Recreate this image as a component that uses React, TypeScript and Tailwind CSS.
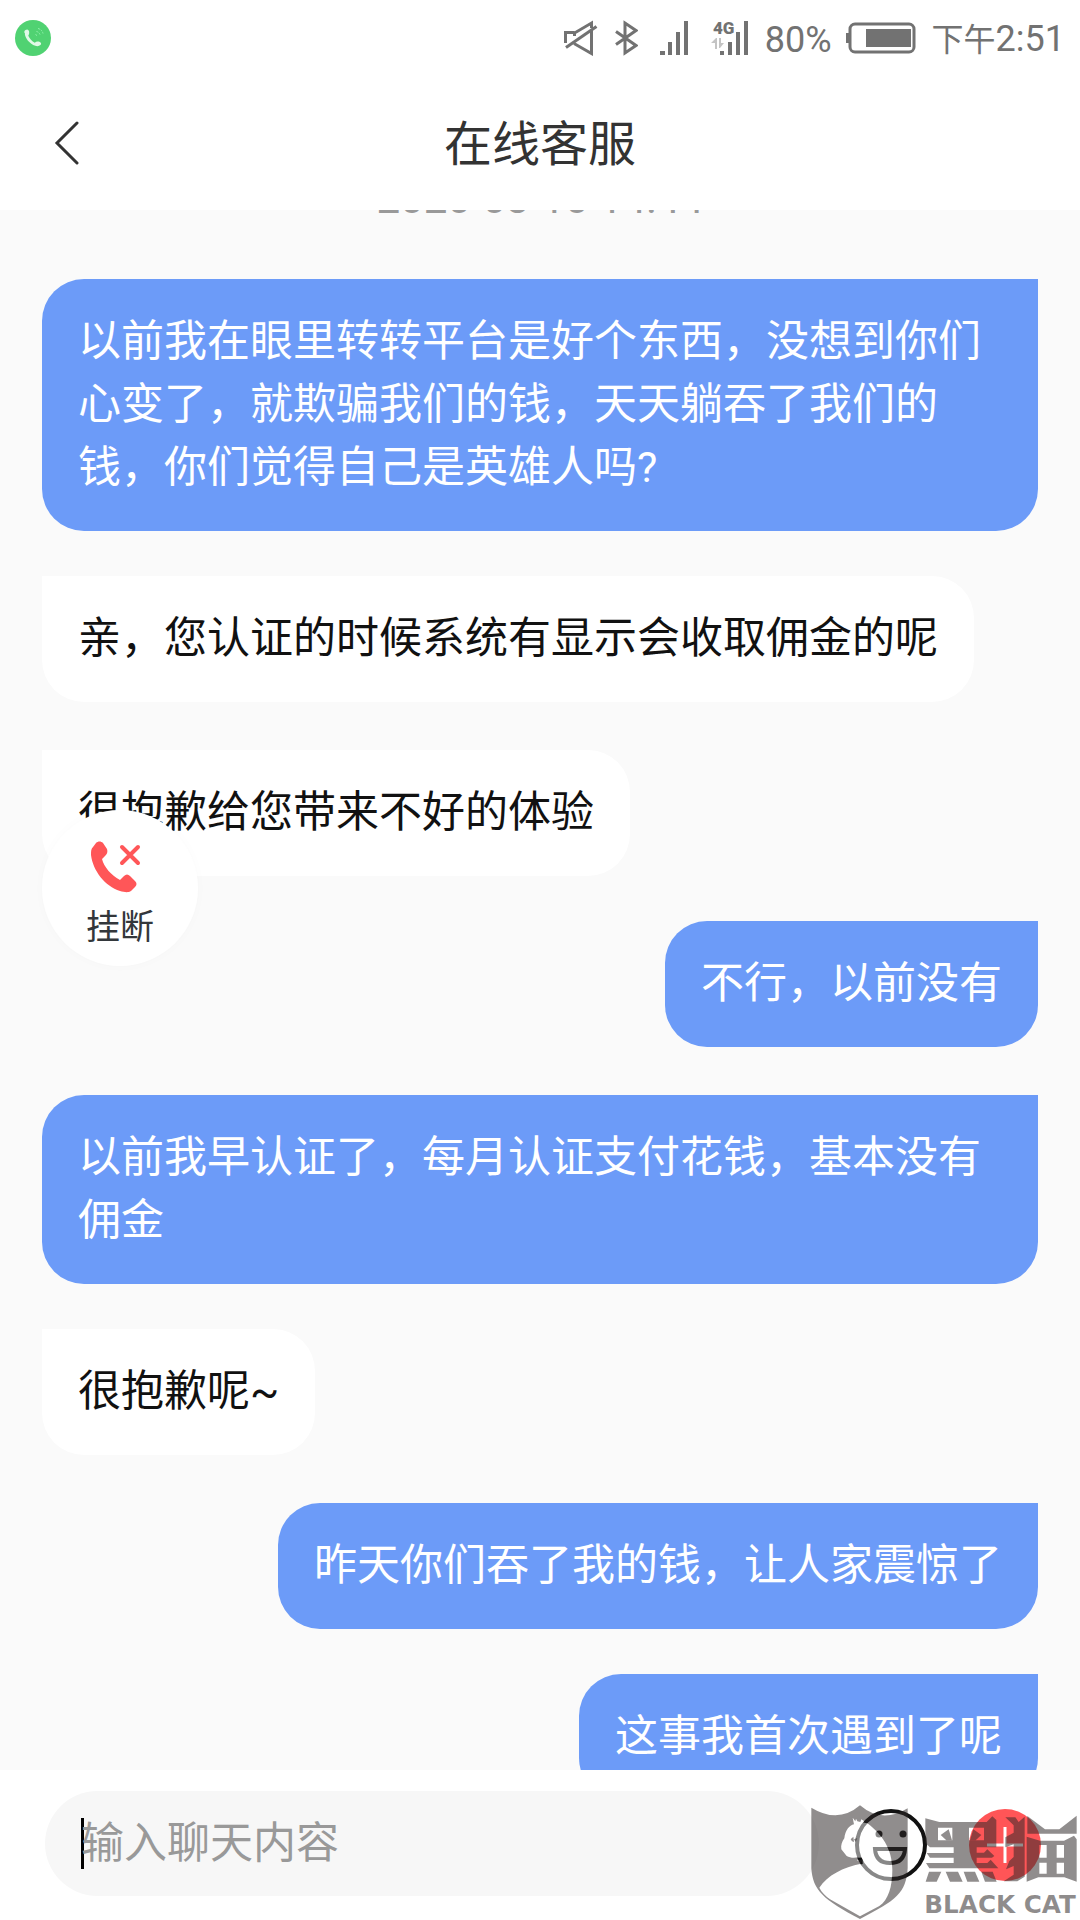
import React, { useState } from 'react';

interface Message {
  id: number;
  from: 'me' | 'agent';
  text: string;
}

const messages: Message[] = [
  { id: 1, from: 'me', text: '以前我在眼里转转平台是好个东西，没想到你们心变了，就欺骗我们的钱，天天躺吞了我们的钱，你们觉得自己是英雄人吗?' },
  { id: 2, from: 'agent', text: '亲，您认证的时候系统有显示会收取佣金的呢' },
  { id: 3, from: 'agent', text: '很抱歉给您带来不好的体验' },
  { id: 4, from: 'me', text: '不行，以前没有' },
  { id: 5, from: 'me', text: '以前我早认证了，每月认证支付花钱，基本没有佣金' },
  { id: 6, from: 'agent', text: '很抱歉呢~' },
  { id: 7, from: 'me', text: '昨天你们吞了我的钱，让人家震惊了' },
  { id: 8, from: 'me', text: '这事我首次遇到了呢' },
];

function StatusBar() {
  return (
    <div className="flex h-[76px] items-center justify-between px-[15px] text-[36px] leading-[42px] text-[#727272]">
      <svg width="36" height="36" viewBox="0 0 36 36">
        <circle cx="18" cy="18" r="18" fill="#50d272" />
        <path d="M10.500 10c2-1.500 3.300 0 3.600 1.500.3 1.700-.1 3-.8 4.200 1.200 2.800 3.700 5.600 6.500 7 1.200-1.300 2.800-1.700 4.600-.9 1.900.9 2.200 2.200 1 3.300-2.600 2.300-7.800.6-11.400-3.300C10.500 18 9.600 14.500 10 13.500 9 12.500 9 11 10.500 10z" fill="#e0f9e7" />
        <path d="M20.500 14.500l1.500 1M21.500 11.500q2.500.5 3.500 3M23 8.500q4 1 5 5" stroke="#8ff0aa" strokeWidth="1" strokeDasharray="2 1" fill="none" />
      </svg>
      <div className="flex items-center">
        <svg className="mr-[17px]" width="34" height="36" viewBox="0 0 34 36" fill="none" stroke="#727272">
          <path d="M1.500 23V12.500h9M10.500 16v-3L27.500 3v5M27.500 10v23.500L10 23.500" strokeWidth="3" />
          <path d="M2 27.500L32.500 6.500" strokeWidth="3" />
        </svg>
        <svg className="mr-[22px]" width="23" height="36" viewBox="0 0 23 36" fill="none" stroke="#727272" strokeWidth="3">
          <path d="M1 11.500l20 14L10 33V3l11 7.500-20 14" />
        </svg>
        <svg className="mr-[22px]" width="29" height="36" viewBox="0 0 29 36" fill="#727272">
          <path d="M0 31h5v4H0zM8 22h4v13H8zM16 12h4v23h-4zM24 1h4v34h-4z" />
        </svg>
        <svg className="mr-[17px] overflow-visible" width="37" height="36" viewBox="0 0 37 36" fill="#727272">
          <text x="2" y="14" fontSize="17" fontWeight="900" fontFamily="Roboto, sans-serif">4G</text>
          <path d="M9 31h4v4H9zM17 22h4v13h-4zM25 12h4v23h-4zM33 1h4v34h-4z" />
          <path d="M4 29v-6H0l5-5h1v11zM8 18v10h1l4-5h-3v-5z" fill="#c4c4c4" />
        </svg>
        <span className="mr-[14px] pt-[3px]">80%</span>
        <svg className="mr-[16px]" width="70" height="36" viewBox="0 0 70 36" fill="none">
          <path d="M0 13h3v10H0z" fill="#727272" />
          <rect x="4" y="4" width="64" height="28" rx="5" stroke="#727272" strokeWidth="3" />
          <path d="M20 9h45v18H20z" fill="#727272" />
        </svg>
        <span className="pt-[3px]">
          <span className="text-[32px]">下午</span>2:51
        </span>
      </div>
    </div>
  );
}

function Bubble({ message }: { message: Message }) {
  const mine = message.from === 'me';
  return (
    <li className={`flex odd:mt-12 even:mt-[45px] ${mine ? 'justify-end' : 'justify-start'}`}>
      <p
        className={
          mine
            ? 'rounded-[42px] rounded-tr-none bg-[#6c9bf8] px-9 pt-[31px] pb-8 text-white'
            : 'rounded-[42px] rounded-tl-none bg-white px-9 pt-[31px] pb-8 text-[#111111]'
        }
      >
        {message.text}
      </p>
    </li>
  );
}

function HangUpButton() {
  return (
    <button className="absolute left-[42px] top-[600px] flex size-[156px] flex-col items-center gap-[9px] rounded-full bg-white pt-[30px] text-[34px] leading-[48px] text-[#33373b] shadow-[0_0_12px_rgba(0,0,0,0.02)]">
      <svg width="62" height="54" viewBox="0 0 62 54">
        <path d="M7 3c2-2 5-2 7 0l4 6c1 3 0 5-2 7l-3 3c2 8 9 16 18 21l4-4c2-2 4-2 6 0l5 5c2 2 2 4 0 6l-4 4c-3 2-7 1-11 0C16 46 4 31 2 15c0-4 0-6 2-8z" fill="#ff5658" />
        <path d="M33 7l16 16M49 7L33 23" stroke="#ff5658" strokeWidth="4" strokeLinecap="round" />
      </svg>
      挂断
    </button>
  );
}

function Watermark() {
  return (
    <svg className="pointer-events-none absolute bottom-0 right-0 overflow-visible" width="270" height="120" viewBox="90 120 810 360">
      <path
        fill="#fff"
        fillOpacity="0.5"
        d="M222 173L232 184L262 190C305 222 337 265 337 330C337 380 325 420 298 438L240 469L150 415C130 400 120 390 120 380C142 345 190 322 248 312L248 292C225 295 210 294 200 288L184 268C182 255 186 245 193 235C196 210 208 196 222 192Z"
      />
      <g fill="#2d2828" fillOpacity="0.53">
        <path
          fillRule="evenodd"
          d="M94 143Q175 192 240 136Q305 192 383 145V325C378 400 350 420 240 477C130 420 98 390 94 325ZM218 173L222 193C208 196 196 210 193 235C186 245 182 255 184 268L200 288C210 294 225 295 236 291L232 303L248 298L243 311C190 322 142 345 118 383C125 398 138 408 150 418L240 469L298 438C325 420 337 380 337 330C337 265 305 222 262 190L244 178L241 186L232 184L228 176L226 184Z"
        />
        <path d="M212 238l8-8 2 16-6-2zM222 238l10-4-5 12z" />
        <path
          fillRule="evenodd"
          d="M436 175L478 186H620L637 169L649 180V262H590V278H612L622 268L643 288L636 293H590V309H622L632 299L655 325H448L438 309H521V293H450L440 279H521V262H450L436 250ZM474 203V241H517V203ZM567 203V241H612V203Z"
        />
        <path d="M482 225l24-17 10 33h-17zM604 225l-24-17-10 33h17zM447 335h37l-14 30h-33zM497 335h37l14 30h-38zM551 335h34l13 30h-36zM604 335h34l12 30h-35z" />
        <path d="M676 172h30l10 14 18-16v180l-22 14h-41l30-20V318l-23 10 10-25 13-12v-38l-25 9v-30l25-14v-22z" />
        <path d="M742 168l53 40h43l52-41v54H742z" />
        <path
          fillRule="evenodd"
          d="M740 230L780 242H852L882 227L890 238V365L853 352H775L740 365ZM778 255V293H800V255ZM830 255V293H852V255ZM778 308V341H800V308ZM830 308V341H852V308Z"
        />
        <text x="433" y="458" fontSize="74" fontWeight="700" fontFamily="DejaVu Sans, sans-serif">BLACK CAT</text>
      </g>
    </svg>
  );
}

export default function App() {
  const [draft, setDraft] = useState('');

  return (
    <div className="relative flex h-screen flex-col overflow-hidden bg-[#fafafa] font-['Roboto','Noto_Sans_CJK_SC',sans-serif]">
      <header className="shrink-0 bg-white">
        <StatusBar />
        <div className="grid h-[134px] grid-cols-[1fr_auto_1fr] items-center px-[54px]">
          <button aria-label="返回" className="justify-self-start">
            <svg width="26" height="44" viewBox="0 0 26 44" fill="none" stroke="#333" strokeWidth="3">
              <path d="M23 2L3 22l20 20" strokeLinecap="round" />
            </svg>
          </button>
          <h1 className="pt-1 text-[48px] leading-[72px] text-[#333]">在线客服</h1>
        </div>
      </header>

      <main className="relative min-h-0 flex-1 overflow-hidden px-[42px]">
        <time className="-mt-[35px] block text-center text-[42px] leading-[48px] text-[#999]">2020-03-10 14:44</time>
        <ul className="mt-[56px] text-[43px] leading-[63px]">
          {messages.map(message => (
            <Bubble key={message.id} message={message} />
          ))}
        </ul>
        <HangUpButton />
      </main>

      <footer className="relative flex h-[150px] shrink-0 items-center bg-white pl-[45px] pr-[39px]">
        <label className="mb-1 flex h-[105px] min-w-0 flex-1 items-center rounded-full bg-[#f7f7f7] pl-9">
          <span className="h-[51px] w-[3px] shrink-0 bg-black" />
          <input
            aria-label="输入聊天内容"
            value={draft}
            onChange={e => setDraft(e.target.value)}
            placeholder="输入聊天内容"
            className="-ml-[3px] h-[63px] min-w-0 flex-1 bg-transparent text-[43px] leading-[63px] text-[#111] caret-black outline-none placeholder:text-[#999]"
          />
        </label>
        <button aria-label="表情" className="ml-9">
          <svg width="72" height="72" viewBox="0 0 72 72">
            <circle cx="36" cy="36" r="34" fill="none" stroke="#111" strokeWidth="4" />
            <circle cx="24" cy="25" r="3.500" fill="#111" />
            <circle cx="48" cy="25" r="3.500" fill="#111" />
            <path d="M20 40h30q-1 14-15 14t-15-14z" fill="none" stroke="#111" strokeWidth="4" />
          </svg>
        </button>
        <button aria-label="更多" className="ml-[42px]">
          <svg width="72" height="72" viewBox="0 0 72 72">
            <circle cx="36" cy="36" r="36" fill="#ff5557" />
            <path d="M36 18v36M18 36h36" stroke="#fff" strokeWidth="3" />
          </svg>
        </button>
        <Watermark />
      </footer>
    </div>
  );
}
